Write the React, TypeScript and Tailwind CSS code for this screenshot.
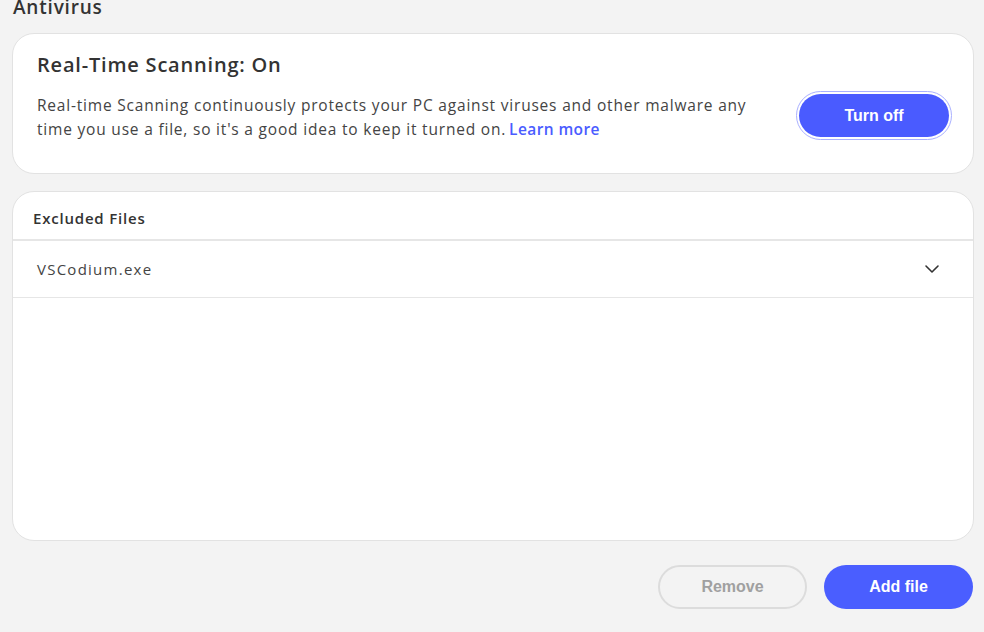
import { ChevronDown } from 'lucide-react';

const font = { fontFamily: '"Open Sans", "Liberation Sans", sans-serif' };

export default function App() {
  return (
    <div className="w-[984px] h-[632px] overflow-hidden bg-[#f3f3f3] text-[#333]" style={font}>
      <h1 className="-mt-[3px] pl-[13px] text-[19px] leading-[20px] font-semibold tracking-[0.8px] text-[#333]">
        Antivirus
      </h1>

      <div className="mt-[16px] ml-[12px] w-[962px] h-[141px] rounded-[22px] border border-[#e2e2e2] bg-white pl-[24px] pr-[21px] flex items-start">
        <div className="flex-1 pt-[17px]">
          <h2 className="text-[20px] leading-[28px] font-semibold tracking-[0.8px] text-[#333]">
            Real-Time Scanning: On
          </h2>
          <p className="mt-[14px] max-w-[740px] text-[15.5px] leading-[24px] text-[#444] tracking-[0.8px]">
            Real-time Scanning continuously protects your PC against viruses and other malware any
            time you use a file, so it's a good idea to keep it turned on.
            <a href="#" className="ml-[3px] font-semibold tracking-[0.4px] text-[#4a5cff]">
              Learn more
            </a>
          </p>
        </div>
        <div className="mt-[57px] rounded-full border border-[#a9b0ff] p-[2px]">
          <button
            className="w-[150px] h-[43px] rounded-full bg-[#4a5bff] text-white text-[16px] font-bold"
            style={{ fontFamily: '"Liberation Sans", Arial, sans-serif' }}
          >
            Turn off
          </button>
        </div>
      </div>

      <div className="mt-[17px] ml-[12px] w-[962px] h-[350px] rounded-[22px] border border-[#e2e2e2] bg-white overflow-hidden">
        <div className="h-[49px] pl-[20px] pt-[16px] border-b-2 border-[#e6e6e6]">
          <span className="block text-[15px] leading-[20px] font-semibold tracking-[0.8px] text-[#333]">
            Excluded Files
          </span>
        </div>
        <div className="h-[57px] pl-[24px] pr-[29px] flex items-center justify-between border-b border-[#e6e6e6]">
          <span className="text-[15px] text-[#444] tracking-[1.25px]">VSCodium.exe</span>
          <ChevronDown size={24} strokeWidth={1.6} className="text-[#333]" />
        </div>
      </div>

      <div
        className="mt-[24px] pr-[11px] flex justify-end gap-[17px]"
        style={{ fontFamily: '"Liberation Sans", Arial, sans-serif' }}
      >
        <button className="w-[149px] h-[44px] rounded-full border-2 border-[#dcdcdc] text-[16px] font-bold text-[#a0a0a0]">
          Remove
        </button>
        <button className="w-[149px] h-[44px] rounded-full bg-[#4a5eff] text-[16px] font-bold text-white">
          Add file
        </button>
      </div>
    </div>
  );
}
